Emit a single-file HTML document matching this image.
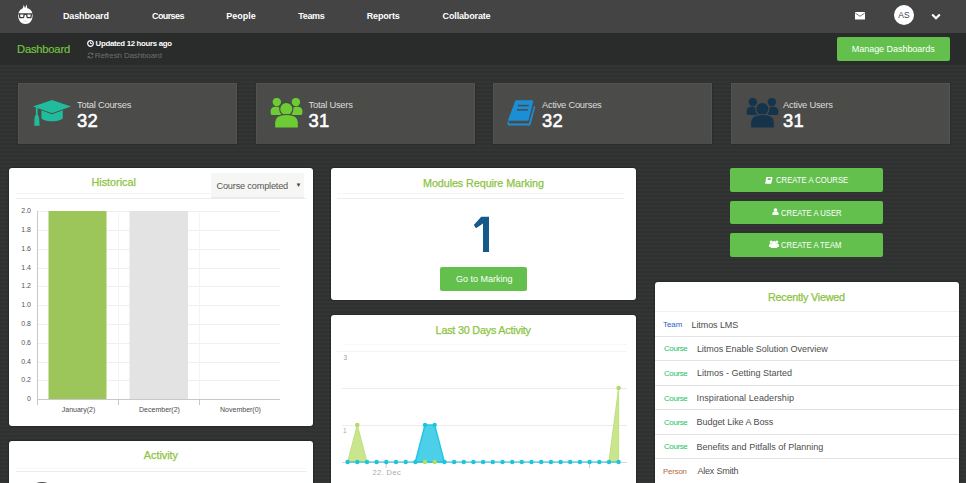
<!DOCTYPE html>
<html><head><meta charset="utf-8">
<style>
*{margin:0;padding:0;box-sizing:border-box}
html,body{width:966px;height:483px;overflow:hidden}
body{position:relative;background:#313333;font-family:"Liberation Sans",sans-serif;
background-image:repeating-linear-gradient(0deg,rgba(255,255,255,0.01) 0 2px,rgba(0,0,0,0.035) 2px 4px)}
.a{position:absolute;white-space:nowrap;line-height:1}
#nav{position:absolute;left:0;top:0;width:966px;height:33px;background:#444}
#sub{position:absolute;left:0;top:33px;width:966px;height:32px;background:#2a2b2b}
.nv{color:#fff;font-weight:bold;font-size:9px}
.btn{position:absolute;background:#63c04d;border-radius:2px;color:#fff}
.stat{position:absolute;top:83px;height:61px;width:219px;background:#4b4b4a;border:1px solid #535353;border-bottom-color:#4b4b4a;box-shadow:0 0 1.5px 0.5px #222}
.sl{color:#ddd;font-size:9.4px;letter-spacing:-0.25px}
.sn{color:#fff;font-weight:normal;font-size:18.4px;letter-spacing:0.3px;-webkit-text-stroke:0.55px #fff}
.panel{position:absolute;background:#fff;border-radius:3px;box-shadow:0 0 2px rgba(0,0,0,0.7)}
.pt{color:#8cc43f;font-size:10.8px;letter-spacing:-0.15px;-webkit-text-stroke:0.25px #8cc43f}
.hr{position:absolute;height:1px;background:#ececec}
.yl{color:#555;font-size:7px;text-align:right;width:20px}
.grid{position:absolute;height:1px;background:#f0f0f0}
.rv{position:absolute;left:0;width:304px;height:1px;background:#e3e3e3}
.lab{font-size:7.9px}
.nm{font-size:9px;color:#4d4d4d;letter-spacing:-0.05px}
.bt{font-size:9px;letter-spacing:-0.1px}
.bc{font-size:8.4px;color:#fff;transform:scaleX(0.92);transform-origin:0 0}
</style></head><body>

<div id="nav"></div>
<div id="sub"></div>

<!-- logo -->
<svg class="a" style="left:17px;top:3px" width="17" height="22" viewBox="17 3 17 22">
  <path d="M22.6 9 L23.8 4.8 L25 8.2 L26.6 4.6 L27.4 9 Z" fill="#fff"/>
  <path d="M25.4 8 C29.8 8 32.6 11 32.6 15.5 C32.6 20.5 29.5 24 25.4 24 C21.3 24 18.2 20.5 18.2 15.5 C18.2 11 21 8 25.4 8 Z" fill="#fff"/>
  <path d="M18.2 13.3 L32.6 13.3 L32.6 14.6 L32 14.6 L31.6 17.4 C31.5 18 31.1 18.2 30.5 18.2 L27.6 18.2 C27 18.2 26.6 17.9 26.5 17.3 L26.1 15 L24.7 15 L24.3 17.3 C24.2 17.9 23.8 18.2 23.2 18.2 L20.3 18.2 C19.7 18.2 19.3 18 19.2 17.4 L18.8 14.6 L18.2 14.6 Z M20.1 14.6 L20.5 16.9 L23.1 16.9 L23.5 14.6 Z M27.3 14.6 L27.7 16.9 L30.3 16.9 L30.7 14.6 Z" fill="#3c3c3c" fill-rule="evenodd"/>
  <path d="M23.5 20.6 C24.6 21.4 26.2 21.4 27.3 20.6" stroke="#bbb" stroke-width="0.6" fill="none"/>
</svg>
<div class="a nv" style="left:62.9px;top:12.1px;letter-spacing:-0.12px">Dashboard</div>
<div class="a nv" style="left:152px;top:12.1px;letter-spacing:-0.6px">Courses</div>
<div class="a nv" style="left:226.2px;top:12.1px;letter-spacing:0px">People</div>
<div class="a nv" style="left:298.3px;top:12.1px;letter-spacing:-0.35px">Teams</div>
<div class="a nv" style="left:366.8px;top:12.1px;letter-spacing:-0.18px">Reports</div>
<div class="a nv" style="left:442.6px;top:12.1px;letter-spacing:-0.15px">Collaborate</div>

<!-- envelope -->
<svg class="a" style="left:854.5px;top:12.4px" width="10" height="7.5" viewBox="0 0 10 7.5">
  <rect x="0" y="0" width="10" height="7.5" fill="#fff"/>
  <path d="M0.3 1 L5 4.3 L9.7 1" fill="none" stroke="#555" stroke-width="0.8"/>
</svg>
<!-- avatar -->
<div class="a" style="left:894px;top:5px;width:20px;height:20px;border-radius:50%;background:#fff"></div>
<div class="a" style="left:894px;top:11px;width:20px;text-align:center;font-size:8.5px;color:#3b4656">AS</div>
<!-- chevron -->
<svg class="a" style="left:931px;top:13px" width="10" height="7" viewBox="0 0 10 7">
  <path d="M1.2 1.5 L5 5.2 L8.8 1.5" fill="none" stroke="#fff" stroke-width="2.2"/>
</svg>

<!-- subheader -->
<div class="a" style="left:17px;top:44.1px;font-size:11.2px;letter-spacing:-0.2px;color:#74c240;-webkit-text-stroke:0.2px #74c240">Dashboard</div>
<svg class="a" style="left:86.5px;top:40px" width="7" height="7" viewBox="0 0 7 7">
  <circle cx="3.5" cy="3.5" r="2.8" fill="none" stroke="#fff" stroke-width="1.2"/>
  <path d="M3.5 1.8 V3.6 H5" fill="none" stroke="#fff" stroke-width="0.9"/>
</svg>
<div class="a" style="left:95.6px;top:39.7px;font-size:7.8px;font-weight:bold;color:#fff;letter-spacing:-0.29px">Updated 12 hours ago</div>
<svg class="a" style="left:86.5px;top:52px" width="7" height="7" viewBox="0 0 7 7">
  <path d="M5.6 2.2 A2.6 2.6 0 0 0 1 2.6" fill="none" stroke="#666" stroke-width="1.1"/>
  <path d="M1.4 4.8 A2.6 2.6 0 0 0 6 4.4" fill="none" stroke="#666" stroke-width="1.1"/>
  <path d="M6.4 0.6 L6.4 3 L4 3 Z" fill="#666"/><path d="M0.6 6.4 L0.6 4 L3 4 Z" fill="#666"/>
</svg>
<div class="a" style="left:94.8px;top:51.5px;font-size:8px;color:#6e6e6e;letter-spacing:-0.14px">Refresh Dashboard</div>

<div class="btn" style="left:837px;top:37px;width:113px;height:24px"></div>
<div class="a bt" style="left:851.8px;top:44.8px;color:#fff;letter-spacing:-0.04px">Manage Dashboards</div>

<!-- stat boxes -->
<div class="stat" style="left:18px"></div>
<div class="stat" style="left:256px"></div>
<div class="stat" style="left:493px"></div>
<div class="stat" style="left:731px"></div>

<!-- grad cap -->
<svg class="a" style="left:32px;top:99px" width="40" height="28" viewBox="0 0 40 28">
  <path d="M1 7.4 L20 1 L39 7.4 L20 14.2 Z" fill="#20bc9c"/>
  <path d="M9.4 11.2 L20 15.2 L30.8 11.2 L30.8 18.5 C30.8 23.6 9.4 23.6 9.4 18.5 Z" fill="#20bc9c"/>
  <path d="M4.8 8.2 L4.8 18" stroke="#20bc9c" stroke-width="1.8"/>
  <path d="M4.8 15.5 C6.2 15.5 7 17 7.2 20 L7.6 26.8 L2.2 26.8 L2.5 20 C2.6 17 3.4 15.5 4.8 15.5 Z" fill="#20bc9c"/>
</svg>
<div class="a sl" style="left:77px;top:99.5px">Total Courses</div>
<div class="a sn" style="left:77px;top:112px">32</div>

<!-- users green -->
<svg class="a" style="left:270px;top:98px" width="33" height="31" viewBox="0 0 33 31">
  <g fill="#6dcc34">
    <circle cx="6.8" cy="4" r="4.2"/><circle cx="25.9" cy="4" r="4.2"/>
    <path d="M0.6 13.5 C0.6 10 2.8 8.8 5.8 8.8 C8.8 8.8 11.5 10 11.5 13 L11.5 17 L2 17 C1 17 0.6 16 0.6 13.5 Z"/>
    <path d="M21.5 13 C21.5 10 24.2 8.8 27.2 8.8 C30.2 8.8 32.4 10 32.4 13.5 C32.4 16 32 17 31 17 L21.5 17 Z"/>
    <circle cx="16.3" cy="11" r="6.6" stroke="#4a4a4a" stroke-width="1.1"/>
    <path d="M4.6 30 L4.6 24.5 C4.6 18.8 9.8 16.5 16.5 16.5 C23.2 16.5 28.4 18.8 28.4 24.5 L28.4 30 Z" stroke="#4a4a4a" stroke-width="1.1"/>
  </g>
</svg>
<div class="a sl" style="left:308.5px;top:99.5px">Total Users</div>
<div class="a sn" style="left:308.5px;top:112px">31</div>

<!-- book blue -->
<svg class="a" style="left:507px;top:99px" width="30" height="28" viewBox="0 0 30 28">
  <path d="M9.5 1.3 L24.6 1.3 C25.8 1.3 26.3 2 26 3 L21.8 20.6 C21.6 21.4 21 21.8 20.2 21.8 L0.8 21.8 L8 2.6 C8.3 1.8 8.8 1.3 9.5 1.3 Z" fill="#1b8fd6"/>
  <path d="M27 6.8 L28.3 7.8 L23.6 25.4 C23.4 26.2 22.8 26.6 22 26.6 L3 26.6 C1 26.6 0.1 25.4 0.4 23.6 L0.8 22.6 L1.8 22.6 C1.5 23.9 2 24.6 3.3 24.6 L21 24.6 C21.7 24.6 22 24.3 22.2 23.6 Z" fill="#1b8fd6"/>
  <rect x="11" y="5.8" width="10.8" height="1.5" fill="#4a4a4a"/>
  <rect x="10" y="10.1" width="10.8" height="1.5" fill="#4a4a4a"/>
</svg>
<div class="a sl" style="left:542px;top:99.5px">Active Courses</div>
<div class="a sn" style="left:542px;top:112px">32</div>

<!-- users navy -->
<svg class="a" style="left:745.5px;top:98px" width="33" height="31" viewBox="0 0 33 31">
  <g fill="#15344c">
    <circle cx="6.8" cy="4" r="4.2"/><circle cx="25.9" cy="4" r="4.2"/>
    <path d="M0.6 13.5 C0.6 10 2.8 8.8 5.8 8.8 C8.8 8.8 11.5 10 11.5 13 L11.5 17 L2 17 C1 17 0.6 16 0.6 13.5 Z"/>
    <path d="M21.5 13 C21.5 10 24.2 8.8 27.2 8.8 C30.2 8.8 32.4 10 32.4 13.5 C32.4 16 32 17 31 17 L21.5 17 Z"/>
    <circle cx="16.3" cy="11" r="6.6" stroke="#4a4a4a" stroke-width="1.1"/>
    <path d="M4.6 30 L4.6 24.5 C4.6 18.8 9.8 16.5 16.5 16.5 C23.2 16.5 28.4 18.8 28.4 24.5 L28.4 30 Z" stroke="#4a4a4a" stroke-width="1.1"/>
  </g>
</svg>
<div class="a sl" style="left:783px;top:99.5px">Active Users</div>
<div class="a sn" style="left:783px;top:112px">31</div>

<!-- Historical panel -->
<div class="panel" style="left:9px;top:168px;width:304px;height:258px"></div>
<div class="a pt" style="left:91.5px;top:176.9px;letter-spacing:0">Historical</div>
<div class="a" style="left:211px;top:173px;width:93px;height:25px;background:#f6f6f4;border-bottom:1px solid #ebebe9"></div>
<div class="a" style="left:216.5px;top:181.6px;font-size:9.2px;color:#555;letter-spacing:-0.19px">Course completed</div>
<div class="a" style="left:295.5px;top:182px;font-size:6px;color:#444">&#9660;</div>
<div class="hr" style="left:16px;top:193px;width:195px;background:#f6f6f6"></div><div class="hr" style="left:16px;top:198px;width:290px"></div>

<!-- chart grid -->
<div id="hgrid"></div>
<svg class="a" style="left:0;top:200px" width="320" height="225" viewBox="0 200 320 225">
  <g stroke="#efefef" stroke-width="1">
    <line x1="37" y1="211.5" x2="280" y2="211.5"/>
    <line x1="37" y1="230.5" x2="280" y2="230.5"/>
    <line x1="37" y1="249.5" x2="280" y2="249.5"/>
    <line x1="37" y1="268.5" x2="280" y2="268.5"/>
    <line x1="37" y1="286.5" x2="280" y2="286.5"/>
    <line x1="37" y1="305.5" x2="280" y2="305.5"/>
    <line x1="37" y1="324.5" x2="280" y2="324.5"/>
    <line x1="37" y1="343.5" x2="280" y2="343.5"/>
    <line x1="37" y1="362.5" x2="280" y2="362.5"/>
    <line x1="37" y1="380.5" x2="280" y2="380.5"/>
  </g>
  <g stroke="#f4f4f4" stroke-width="1">
    <line x1="118.5" y1="211" x2="118.5" y2="399"/>
    <line x1="199.5" y1="211" x2="199.5" y2="399"/>
  </g>
  <rect x="48.5" y="211" width="58" height="188.5" fill="#9cc65a"/>
  <rect x="129.5" y="211" width="58.5" height="188.5" fill="#e3e3e3"/>
  <g stroke="#c8c8c8" stroke-width="1">
    <line x1="37.5" y1="211" x2="37.5" y2="405"/>
    <line x1="37" y1="399.5" x2="280" y2="399.5"/>
    <line x1="118.5" y1="399" x2="118.5" y2="405"/>
    <line x1="199.5" y1="399" x2="199.5" y2="405"/>
  </g>
</svg>
<div class="a yl" style="left:11px;top:207px">2.0</div>
<div class="a yl" style="left:11px;top:226px">1.8</div>
<div class="a yl" style="left:11px;top:245px">1.6</div>
<div class="a yl" style="left:11px;top:264px">1.4</div>
<div class="a yl" style="left:11px;top:282px">1.2</div>
<div class="a yl" style="left:11px;top:301px">1.0</div>
<div class="a yl" style="left:11px;top:320px">0.8</div>
<div class="a yl" style="left:11px;top:339px">0.6</div>
<div class="a yl" style="left:11px;top:358px">0.4</div>
<div class="a yl" style="left:11px;top:376px">0.2</div>
<div class="a yl" style="left:11px;top:395px">0</div>
<div class="a" style="left:38px;top:406px;width:81px;text-align:center;font-size:7px;color:#4a4a4a">January(2)</div>
<div class="a" style="left:119px;top:406px;width:81px;text-align:center;font-size:7px;color:#4a4a4a">December(2)</div>
<div class="a" style="left:200px;top:406px;width:81px;text-align:center;font-size:7px;color:#4a4a4a">November(0)</div>

<!-- Activity panel -->
<div class="panel" style="left:9px;top:441px;width:304px;height:60px"></div>
<div class="a pt" style="left:143.8px;top:449.9px;letter-spacing:0">Activity</div>
<div class="hr" style="left:16px;top:468px;width:290px;background:#f7f7f7"></div><div class="hr" style="left:16px;top:471px;width:290px"></div>
<div class="a" style="left:26.5px;top:481.6px;width:30px;height:30px;border-radius:50%;background:#4a4a4a"></div>

<!-- Modules panel -->
<div class="panel" style="left:331px;top:168px;width:305px;height:132px"></div>
<div class="a pt" style="left:423px;top:177.8px;letter-spacing:-0.09px">Modules Require Marking</div>
<div class="hr" style="left:337px;top:193px;width:287px;background:#f6f6f6"></div><div class="hr" style="left:337px;top:198px;width:287px"></div>
<svg class="a" style="left:470px;top:214px" width="22" height="40" viewBox="470 214 22 40"><path d="M483 216.7 L489 216.7 L489 251.9 L483 251.9 L483 223.6 L476 228.2 L473.8 225 L481.2 216.7 Z" fill="#14598a"/></svg>
<div class="btn" style="left:440px;top:267px;width:87px;height:24px"></div>
<div class="a bt" style="left:456px;top:275.2px;color:#fff;letter-spacing:0">Go to Marking</div>

<!-- Last 30 days panel -->
<div class="panel" style="left:331px;top:315px;width:305px;height:200px"></div>
<div class="a pt" style="left:435.6px;top:324.5px;letter-spacing:-0.21px">Last 30 Days Activity</div>
<svg class="a" style="left:331px;top:340px" width="305" height="143" viewBox="331 340 305 143">
  <g stroke="#ececec" stroke-width="1">
    <line x1="344" y1="344.5" x2="627" y2="344.5" stroke="#f8f8f8"/><line x1="336" y1="351.5" x2="627" y2="351.5" stroke="#f4f4f4"/>
    <line x1="342" y1="388.5" x2="627" y2="388.5"/>
    <line x1="342" y1="425.5" x2="627" y2="425.5"/>
  </g>
  <line x1="342" y1="462.5" x2="627" y2="462.5" stroke="#d8d8d8"/>
  <line x1="386" y1="462" x2="386" y2="468" stroke="#ccc"/>
  <line x1="589.5" y1="462" x2="589.5" y2="468" stroke="#ccc"/>
  <polygon points="347.6,462 357.3,425 367,462" fill="#c9e68e" stroke="#bde07a" stroke-width="1"/>
  <polygon points="608.9,462 618.6,388 618.6,462" fill="#c9e68e" stroke="#bde07a" stroke-width="1"/>
  <polygon points="415.3,462 425,425 434.7,425 444.4,462" fill="#4ccfe9" stroke="#22c6e2" stroke-width="1.4"/>
  <circle cx="357.3" cy="425" r="2.3" fill="#b5da6a"/>
  <circle cx="618.6" cy="388" r="2.3" fill="#b5da6a"/>
    <line x1="347.6" y1="462" x2="618.6" y2="462" stroke="#1fc4dc" stroke-width="1.2"/><g fill="#1fc4dc"><circle cx="347.6" cy="462" r="2.2"/><circle cx="357.3" cy="462" r="2.2"/><circle cx="367.0" cy="462" r="2.2"/><circle cx="376.6" cy="462" r="2.2"/><circle cx="386.3" cy="462" r="2.2"/><circle cx="396.0" cy="462" r="2.2"/><circle cx="405.7" cy="462" r="2.2"/><circle cx="415.4" cy="462" r="2.2"/><circle cx="425.0" cy="425" r="2.2"/><circle cx="434.7" cy="425" r="2.2"/><circle cx="444.4" cy="462" r="2.2"/><circle cx="454.1" cy="462" r="2.2"/><circle cx="463.8" cy="462" r="2.2"/><circle cx="473.4" cy="462" r="2.2"/><circle cx="483.1" cy="462" r="2.2"/><circle cx="492.8" cy="462" r="2.2"/><circle cx="502.5" cy="462" r="2.2"/><circle cx="512.2" cy="462" r="2.2"/><circle cx="521.8" cy="462" r="2.2"/><circle cx="531.5" cy="462" r="2.2"/><circle cx="541.2" cy="462" r="2.2"/><circle cx="550.9" cy="462" r="2.2"/><circle cx="560.6" cy="462" r="2.2"/><circle cx="570.2" cy="462" r="2.2"/><circle cx="579.9" cy="462" r="2.2"/><circle cx="589.6" cy="462" r="2.2"/><circle cx="599.3" cy="462" r="2.2"/><circle cx="609.0" cy="462" r="2.2"/><circle cx="618.6" cy="462" r="2.2"/></g><circle cx="425" cy="462" r="2.2" fill="#b9de5a"/><circle cx="434.7" cy="462" r="2.2" fill="#b9de5a"/>
</svg>
<div class="a" style="left:343.5px;top:355px;font-size:6.5px;color:#999">3</div>
<div class="a" style="left:343px;top:428px;font-size:6.5px;color:#aaa">1</div>
<div class="a" style="left:372.5px;top:469px;font-size:7.5px;color:#aaa;letter-spacing:0.4px">22. Dec</div>

<!-- create buttons -->
<div class="btn" style="left:730px;top:168px;width:153px;height:24px"></div>
<div class="btn" style="left:730px;top:201px;width:153px;height:23px"></div>
<div class="btn" style="left:730px;top:233px;width:153px;height:24px"></div>
<div class="a bc" style="left:775.7px;top:175.7px">CREATE A COURSE</div>
<div class="a bc" style="left:780.5px;top:208.7px">CREATE A USER</div>
<div class="a bc" style="left:781px;top:241.2px">CREATE A TEAM</div>
<svg class="a" style="left:764px;top:176px" width="10" height="9" viewBox="764 176 10 9"><path fill-rule="evenodd" d="M767 177 L771.5 177 C772.3 177 772.6 177.5 772.4 178.2 L771.2 183.8 L765.2 183.8 L766.2 177.8 C766.3 177.3 766.6 177 767 177 Z M767.8 178.2 L770.9 178.2 L770.6 180.1 L767.5 180.1 Z" fill="#fff"/></svg>
<svg class="a" style="left:772px;top:208px" width="7" height="7" viewBox="0 0 7 7"><circle cx="3.5" cy="2" r="1.8" fill="#fff"/><path d="M0.3 7 C0.3 4 1.5 3.6 3.5 3.6 C5.5 3.6 6.7 4 6.7 7Z" fill="#fff"/></svg>
<svg class="a" style="left:769px;top:240px" width="10" height="8" viewBox="0 0 10 8"><circle cx="2.2" cy="2" r="1.5" fill="#fff"/><circle cx="7.8" cy="2" r="1.5" fill="#fff"/><circle cx="5" cy="3" r="2" fill="#fff"/><path d="M0 6 C0 4 1 3.5 2.5 3.5 L7.5 3.5 C9 3.5 10 4 10 6 L10 7 L0 7Z" fill="#fff"/><path d="M1.8 8 C1.8 5.5 3 5 5 5 C7 5 8.2 5.5 8.2 8Z" fill="#fff"/></svg>

<!-- Recently viewed -->
<div class="panel" style="left:655px;top:282px;width:304px;height:220px;overflow:hidden">
  <div class="rv" style="top:29px;background:#f0f0f0"></div>
  <div class="rv" style="top:54px"></div>
  <div class="rv" style="top:78px"></div>
  <div class="rv" style="top:103px"></div>
  <div class="rv" style="top:127px"></div>
  <div class="rv" style="top:152px"></div>
  <div class="rv" style="top:176px"></div>
</div>
<div class="a pt" style="left:768px;top:292.1px;letter-spacing:-0.23px">Recently Viewed</div>
<div class="a lab" style="left:663px;top:321.1px;color:#2a62c4;letter-spacing:0px">Team</div>
<div class="a nm" style="left:691.5px;top:320.7px;letter-spacing:-0.09px">Litmos LMS</div>
<div class="a lab" style="left:664px;top:345.2px;color:#1cc262;letter-spacing:-0.34px">Course</div>
<div class="a nm" style="left:696.9px;top:344.8px;letter-spacing:-0.04px">Litmos Enable Solution Overview</div>
<div class="a lab" style="left:664px;top:369.5px;color:#1cc262;letter-spacing:-0.34px">Course</div>
<div class="a nm" style="left:696.9px;top:369.0px;letter-spacing:0px">Litmos - Getting Started</div>
<div class="a lab" style="left:664px;top:394.5px;color:#1cc262;letter-spacing:-0.34px">Course</div>
<div class="a nm" style="left:696.6px;top:394.1px;letter-spacing:0.08px">Inspirational Leadership</div>
<div class="a lab" style="left:664px;top:418.5px;color:#1cc262;letter-spacing:-0.34px">Course</div>
<div class="a nm" style="left:696.6px;top:418.1px;letter-spacing:-0.05px">Budget Like A Boss</div>
<div class="a lab" style="left:664px;top:443.3px;color:#1cc262;letter-spacing:-0.34px">Course</div>
<div class="a nm" style="left:696.6px;top:442.9px;letter-spacing:0px">Benefits and Pitfalls of Planning</div>
<div class="a lab" style="left:662.9px;top:467.6px;color:#b26a3c;letter-spacing:-0.18px">Person</div>
<div class="a nm" style="left:697.4px;top:467.2px;letter-spacing:-0.2px">Alex Smith</div>



</body></html>
